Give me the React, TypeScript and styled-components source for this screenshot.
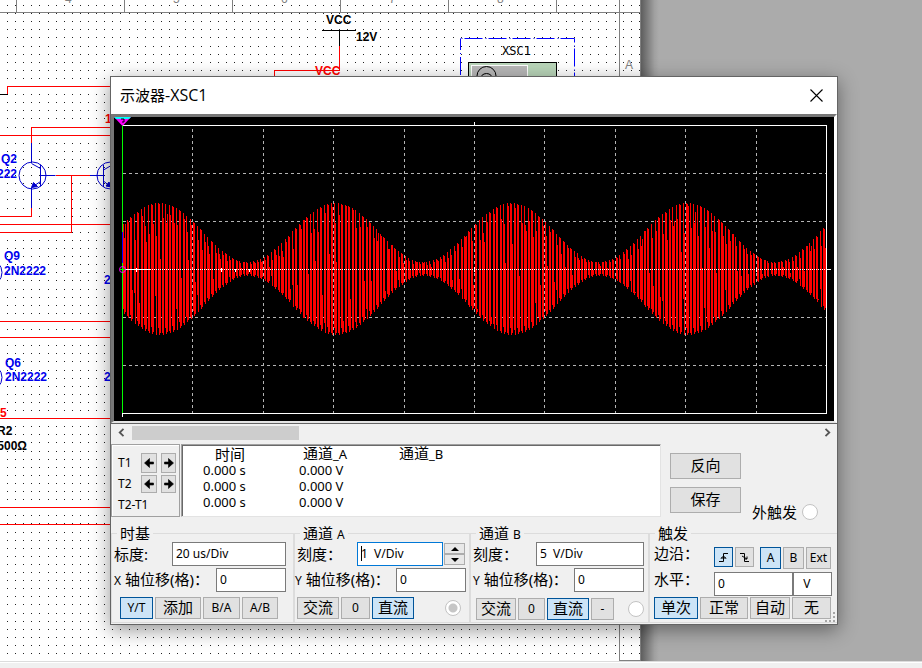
import React from "react";
import styled, { createGlobalStyle, css } from "styled-components";

const GlobalStyle = createGlobalStyle`
  *, *::before, *::after { box-sizing: border-box; }
  html, body, #root { height: 100%; }
  body {
    margin: 0;
    overflow: hidden;
    background: #ababab;
    color: #000;
    font-family: "Noto Sans", "Noto Sans CJK SC", sans-serif;
    font-size: 12px;
  }
  button, input { font: inherit; color: inherit; margin: 0; }
`;

/* ---------- workspace ---------- */

const Workspace = styled.main`
  position: relative;
  display: flex;
  flex-direction: column;
  height: 100%;
  overflow: hidden;
`;

const Canvas = styled.div`
  flex: 1;
  min-height: 0;
  display: flex;
  overflow: hidden;
`;

const Sheet = styled.svg`
  flex: none;
  display: block;
  background: #fff;
`;

const SheetShadow = styled.div`
  width: 18px;
  background: linear-gradient(90deg, #5e5e5e, #7c7c7c 35%, #a0a0a0 75%, #ababab);
`;

const StatusBar = styled.footer`
  height: 7px;
  background: #f0f0f0;
  border-top: 1px solid #dcdcdc;
  box-shadow: inset 0 1px #fff;
`;

/* ---------- dialog ---------- */

const Dialog = styled.section`
  position: absolute;
  top: 76px;
  left: 110px;
  right: 84px;
  border: 1px solid #646464;
  background: #f0f0f0;
  box-shadow: 0 5px 18px rgba(0, 0, 0, 0.42);
`;

const TitleBar = styled.header`
  display: flex;
  align-items: center;
  justify-content: space-between;
  height: 37px;
  padding: 0 14px 0 9px;
  background: #fff;
`;

const Title = styled.h1`
  margin: 0;
  padding-bottom: 2px;
  font-family: "Open Sans", "Noto Sans CJK SC", sans-serif;
  font-size: 15px;
  font-weight: 400;
  line-height: 20px;

  span { font-size: 16px; }
`;

const CloseButton = styled.button`
  display: flex;
  padding: 0;
  border: 0;
  background: none;
`;

const ScopeFrame = styled.div`
  border-style: solid;
  border-width: 3px 3px 2px 3px;
  border-color: #777 #fff #e4e4e4 #777;
  box-shadow: 0 1px #646464;
  background: #000;
`;

const ScopeScreen = styled.svg`
  display: block;
  width: 100%;
  height: auto;
`;

const ScrollBar = styled.div`
  display: flex;
  align-items: center;
  height: 17px;
  margin-top: 1px;
  padding: 0 4px;
`;

const ScrollArrow = styled.button`
  display: flex;
  align-items: center;
  justify-content: center;
  width: 12px;
  padding: 0;
  border: 0;
  background: none;
`;

const ScrollTrack = styled.div`
  flex: 1;
  padding: 0 5px;
`;

const ScrollThumb = styled.div`
  width: 167px;
  height: 14px;
  background: #cdcdcd;
`;

/* ---------- cursor readout ---------- */

const ReadoutRow = styled.div`
  display: flex;
  height: 73px;
  margin-top: 3px;
`;

const CursorPanel = styled.div`
  flex: none;
  display: grid;
  grid-template-columns: 19px 16px 15px;
  grid-template-rows: 20px 18px 20px;
  column-gap: 4px;
  row-gap: 2px;
  align-items: center;
  width: 69px;
  padding: 8px 0 0 6px;
  border: 1px solid #a0a0a0;
  box-shadow: inset 1px 1px #fff;
  line-height: 16px;
`;

const CursorName = styled.span<{ $wide?: boolean }>`
  ${(p) => p.$wide && css`grid-column: 1 / -1;`}
`;

const ArrowButton = styled.button`
  display: flex;
  align-items: center;
  justify-content: center;
  height: 100%;
  padding: 0;
  border: 1px solid #adadad;
  background: #e1e1e1;
`;

const ReadoutBox = styled.div`
  flex: 0 1 480px;
  margin-left: 1px;
  overflow: hidden;
  background: #fff;
  border: 1px solid;
  border-color: #a0a0a0 #e3e3e3 #e3e3e3 #a0a0a0;
  box-shadow: inset 1px 1px #696969;
`;

const ReadoutTable = styled.table`
  border-collapse: collapse;
  margin-left: 21px;

  th, td {
    padding: 0;
    width: 96px;
    text-align: left;
    font-weight: 400;
    font-size: 13px;
    line-height: 16px;
    white-space: pre;
  }
  th {
    font-size: 15px;
    padding-left: 12px;
  }
  th:not(:first-child) {
    padding-left: 4px;
  }
  small { font-size: 13px; }
`;

const ActionColumn = styled.div`
  display: flex;
  flex-direction: column;
  gap: 8px;
  width: 71px;
  margin-left: 9px;
  padding-top: 9px;
`;

const ExternalTrigger = styled.label`
  display: flex;
  align-items: center;
  align-self: flex-end;
  gap: 5px;
  margin: 0 0 -5px 11px;
  font-size: 15px;
  line-height: 20px;
`;

/* ---------- controls ---------- */

const PushButton = styled.button<{ $w?: number; $on?: boolean; $cjk?: boolean; $h?: number }>`
  flex: none;
  display: flex;
  align-items: center;
  justify-content: center;
  width: ${(p) => (p.$w ? `${p.$w}px` : "auto")};
  height: ${(p) => p.$h ?? 22}px;
  padding: 0 0 ${(p) => (p.$cjk ? 2 : 0)}px;
  border: 1px solid ${(p) => (p.$on ? "#005499" : "#adadad")};
  background: ${(p) => (p.$on ? "#cce4f7" : "#e1e1e1")};
  font-size: ${(p) => (p.$cjk ? 15 : 12)}px;
  line-height: 18px;
  white-space: nowrap;
`;

const ActionButton = styled(PushButton)`
  padding-bottom: 3px;
`;

const RadioDot = styled.input`
  appearance: none;
  flex: none;
  width: 16px;
  height: 16px;
  border: 1px solid #c3c3c3;
  border-radius: 50%;
  background: #fff;

  &:checked {
    background: radial-gradient(circle, #c6c6c6 0 4px, #fff 5px);
  }
`;

const Groups = styled.div`
  display: grid;
  grid-template-columns: 182fr 176fr 179fr 189fr;
  margin-top: 8px;
  padding-bottom: 1px;
`;

const Group = styled.fieldset`
  min-width: 0;
  height: 98px;
  margin: 0;
  padding: 0;
  border: 1px solid #dcdcdc;
  border-right-width: 0;

  & + & {
    border-left-width: 2px;
  }
`;

const Legend = styled.legend`
  margin-left: 5px;
  padding: 0 3px;
  height: 17px;
  font-size: 15px;
  line-height: 17px;

  small { font-size: 12px; }
`;

const Line = styled.div<{ $end?: number; $start?: number }>`
  display: flex;
  align-items: center;
  height: 24px;
  padding: 0 ${(p) => p.$end ?? 4}px 0 ${(p) => p.$start ?? 2}px;
  margin-bottom: 2px;
`;

const TriggerLine = styled(Line)`
  align-items: flex-start;
`;

const FieldLabel = styled.label`
  flex: none;
  margin-right: auto;
  font-size: 15px;
  line-height: 22px;
  white-space: pre;

  small { font-size: 12px; }
`;

const TextBox = styled.input<{ $w: number; $focus?: boolean }>`
  flex: none;
  width: ${(p) => p.$w}px;
  height: 24px;
  padding: 0 3px 2px;
  border: 1px solid ${(p) => (p.$focus ? "#0078d7" : "#7a7a7a")};
  border-radius: 0;
  background: #fff;
  outline: 0;
`;

const CaretField = styled.div`
  position: relative;

  &::before {
    content: "";
    position: absolute;
    left: 4px;
    top: 4px;
    width: 1px;
    height: 15px;
    background: #000;
  }
`;

const Spinner = styled.div`
  display: flex;
  flex-direction: column;
  width: 21px;
  margin-left: 1px;

  button {
    display: flex;
    align-items: center;
    justify-content: center;
    height: 11px;
    padding: 0;
    border: 1px solid #adadad;
    background: #e8e8e8;
  }
`;

const Buttons = styled.div<{ $start: number; $top?: number; $end?: number }>`
  display: flex;
  align-items: center;
  gap: 2px;
  padding: ${(p) => p.$top ?? 3}px ${(p) => p.$end ?? 8}px 0 ${(p) => p.$start}px;

  input { margin-left: auto; }
`;

const EdgeButtons = styled.div`
  display: flex;
  gap: 2px;
  padding: 5px 1px 0 0;

  button:nth-child(3) { margin-left: 4px; }
`;

const LevelFields = styled.div`
  display: flex;
  padding-top: 4px;
`;

const Grip = styled.svg`
  position: absolute;
  right: 1px;
  bottom: 1px;
`;

/* ---------- drawings ---------- */

const STEP = 8.1;

function GridDots() {
  let d = "";
  for (let r = 0; r < 81; r++) {
    for (let c = 0; c < 79; c++) {
      d += `M${Math.round(7 + c * STEP)} ${Math.round(5 + r * STEP)}h1v1h-1z`;
    }
  }
  return <path d={d} fill="#222" shapeRendering="crispEdges" />;
}

function Transistor({ cx, cy }: { cx: number; cy: number }) {
  return (
    <g transform={`translate(${cx} ${cy})`} fill="none" stroke="#00c" strokeWidth="1">
      <circle r="13.5" />
      <path d="M8 -11V11M-1 -12L8 -7M8 6L-1 12M8 0H23" />
      <path d="M-1 12L1 7L5 11z" fill="#00c" />
    </g>
  );
}

function Schematic() {
  return (
    <Sheet width="641" height="661" viewBox="0 0 641 661" aria-label="电路图">
      <GridDots />
      <g stroke="#808080" fill="none" shapeRendering="crispEdges">
        <path d="M0 12.5H640M16.5 0V12M124.5 0V12M232.5 0V12M340.5 0V12M448.5 0V12M556.5 0V12M619.5 0V660.5H640M640.5 0V661" />
      </g>
      <g fill="#808080" fontFamily="Liberation Sans, sans-serif" fontSize="12">
        <text x="65" y="3">4</text>
        <text x="173" y="3">5</text>
        <text x="281" y="3">6</text>
        <text x="389" y="3">7</text>
        <text x="497" y="3">8</text>
        <text x="625" y="69">A</text>
      </g>
      <g stroke="red" fill="none" shapeRendering="crispEdges">
        <path d="M7.5 94V86.5H112M112 127.5H31.5V144M0 135.5H112M56 175.5H90M31.5 207V216.5H0M0 224.5H112M0 232.5H71.5V175M0 321.5H112M0 337.5H112M0 418.5H112M0 507.5H112M0 524.5H112" />
        <path d="M339.5 46V70.5H274.5V80" />
      </g>
      <path d="M0 94.5H8M322 30.5H356M339.5 30V46" stroke="#000" shapeRendering="crispEdges" />
      <path d="M31.5 143V163M31.5 188V208M90 175.5H103" stroke="#00c" shapeRendering="crispEdges" />
      <Transistor cx={32.5} cy={175.5} />
      <g fill="none" stroke="#00c">
        <circle cx="110.5" cy="175.5" r="13.5" />
        <path d="M103.5 165V187M103.5 170L112 165M103.5 181L112 188" />
        <path d="M106 186L109 182L111 187z" fill="#00c" />
        <circle cx="-11.5" cy="272.5" r="13.5" />
        <circle cx="-11.5" cy="377.5" r="13.5" />
      </g>
      <g fontFamily="Liberation Sans, sans-serif" fontSize="12" fontWeight="700">
        <g fill="#00e">
          <text x="1" y="163">Q2</text>
          <text x="17" y="178" textAnchor="end">2N2222</text>
          <text x="4" y="260">Q9</text>
          <text x="4" y="275">2N2222</text>
          <text x="104" y="284">2N2222</text>
          <text x="5" y="367">Q6</text>
          <text x="5" y="381">2N2222</text>
          <text x="104" y="381">2N2222</text>
        </g>
        <g fill="red">
          <text x="0" y="417">5</text>
          <text x="105" y="123">1</text>
          <text x="315" y="75">VCC</text>
        </g>
        <text x="-3" y="435">R2</text>
        <text x="27" y="450" textAnchor="end">500Ω</text>
        <text x="326" y="24">VCC</text>
        <text x="356" y="41">12V</text>
      </g>
      <path d="M460.5 80V38.5" stroke="#00f" strokeDasharray="18 3 1 3" strokeDashoffset="-5" fill="none" />
      <path d="M460.5 38.5H574.5V80" stroke="#00f" strokeDasharray="18 3 1 2" strokeDashoffset="-4" fill="none" />
      <text x="502" y="55" fontFamily="DejaVu Sans Mono, monospace" fontSize="12">XSC1</text>
      <rect x="468.5" y="62.5" width="88" height="30" fill="#b9d5b9" stroke="#000" />
      <rect x="471.5" y="65.5" width="56" height="30" fill="#b8b8b8" stroke="#fff" />
      <g fill="none" stroke="#000">
        <circle cx="486.5" cy="76" r="9.5" />
        <circle cx="486.5" cy="80" r="6.5" />
      </g>
    </Sheet>
  );
}

/* Amplitude-modulated carrier: 200 cycles across ten divisions, envelope period 2.5 divisions. */
function modulatedWave() {
  const mid = 152;
  const period = 3.52;
  const left = (k: number) => 9 + Math.round(k * period);
  const amp = (x: number) => 36.5 + 29.5 * Math.cos((2 * Math.PI * (x - 45)) / 176);
  let d = "";
  const bar = (x: number, from: number, to: number) => {
    if (x < 712 && to > from) d += `M${x} ${Math.round(from)}h1V${Math.round(to)}h-1z`;
  };
  for (let k = 0; k < 200; k++) {
    const x = left(k);
    const a = amp(x);
    const top = mid - a;
    const bottom = mid + a;
    const noise = ((k * 73 + k * k * 29) % 97) / 97;
    const wide = left(k + 1) - x === 4;
    if (wide) {
      const split = top + 2 * a * noise;
      bar(x, top, bottom - a * 0.1);
      bar(x + 1, top + (k % 3 ? 1 : a * 0.3), bottom);
      bar(x + 2, split, bottom - 2);
    } else {
      bar(x, top, k % 3 ? bottom - 2 : bottom - a * noise * 0.6);
      bar(x + 1, top + a * noise * 0.5, bottom);
    }
  }
  return d;
}

function Scope() {
  const columns = Array.from({ length: 9 }, (_, i) => Math.round(8 + (i + 1) * 70.4));
  return (
    <ScopeScreen viewBox="0 0 720 304" shapeRendering="crispEdges" role="img" aria-label="通道 A 波形">
      <g stroke="#b4b4b4" strokeDasharray="3 3">
        {columns.map((x) => (
          <path key={x} d={`M${x + 0.5} 12V296`} />
        ))}
        {[56, 104, 200, 248].map((y) => (
          <path key={y} d={`M9 ${y + 0.5}H712`} />
        ))}
      </g>
      <path d={modulatedWave()} fill="red" />
      <path d="M9 8.5H712.5V296.5H8M8.5 296V300M360.5 5V8" stroke="#fff" fill="none" />
      <path d="M6 152.5H36M712 152.5H717" stroke="#fff" />
      <path d="M36 152.5H712" stroke="#fff" strokeDasharray="1 1" />
      <path d="M22.5 151V155M107.5 151V155M121.5 152V155M135.5 152V155M360.5 150V155M642.5 151V155" stroke="#fff" />
      <path d="M8.5 2V296" stroke="#0f0" />
      <path d="M8.5 115V146" stroke="#00f" />
      <g shapeRendering="auto">
        <path d="M0 0H17L9 8.5H8z" fill="#f0f" />
        <path d="M0 0H17L15 2H2z" fill="#0ff" />
        <path d="M7 2H10V5H8" stroke="#000" fill="none" />
        <circle cx="8.5" cy="152.5" r="3" fill="none" stroke="#f0f" />
      </g>
      <path d="M6 152.5H11M8.5 150V155" stroke="#0f0" />
    </ScopeScreen>
  );
}

function Arrow({ right }: { right?: boolean }) {
  return (
    <svg width="10" height="10" viewBox="0 0 10 10" aria-hidden="true">
      <path
        d={right ? "M0.5 4H4.5V0.5L9.5 5L4.5 9.5V6H0.5z" : "M9.5 4H5.5V0.5L0.5 5L5.5 9.5V6H9.5z"}
        fill="#000"
        stroke="#000"
        strokeWidth="0.6"
      />
    </svg>
  );
}

function Chevron({ right }: { right?: boolean }) {
  return (
    <svg width="7" height="9" viewBox="0 0 7 9" aria-hidden="true">
      <path d={right ? "M1.5 0.8L5.3 4.5L1.5 8.2" : "M5.5 0.8L1.7 4.5L5.5 8.2"} fill="none" stroke="#555" strokeWidth="1.8" />
    </svg>
  );
}

function Triangle({ down }: { down?: boolean }) {
  return (
    <svg width="8" height="4" viewBox="0 0 8 4" aria-hidden="true">
      <path d={down ? "M0 0H8L4 4z" : "M0 4H8L4 0z"} fill="#000" />
    </svg>
  );
}

function EdgeIcon({ falling }: { falling?: boolean }) {
  return (
    <svg width="11" height="11" viewBox="0 0 11 11" fill="none" stroke="#000" aria-hidden="true">
      {falling ? (
        <path d="M1 1.5H5.5V9.5H10M3 4L8 7M8 4.5V7H5" />
      ) : (
        <path d="M1 9.5H5.5V1.5H10M3 6.5L5.5 4L8 6.5M3 6H8" />
      )}
    </svg>
  );
}

/* ---------- page ---------- */

export default function App() {
  return (
    <Workspace>
      <GlobalStyle />
      <Canvas>
        <Schematic />
        <SheetShadow />
      </Canvas>
      <StatusBar />

      <Dialog role="dialog" aria-labelledby="dialog-title">
        <TitleBar>
          <Title id="dialog-title">示波器<span>-XSC1</span></Title>
          <CloseButton aria-label="关闭">
            <svg width="13" height="13" viewBox="0 0 13 13">
              <path d="M0.5 0.5L12.5 12.5M12.5 0.5L0.5 12.5" stroke="#000" strokeWidth="1.1" />
            </svg>
          </CloseButton>
        </TitleBar>

        <ScopeFrame>
          <Scope />
        </ScopeFrame>

        <ScrollBar>
          <ScrollArrow aria-label="向左"><Chevron /></ScrollArrow>
          <ScrollTrack><ScrollThumb /></ScrollTrack>
          <ScrollArrow aria-label="向右"><Chevron right /></ScrollArrow>
        </ScrollBar>

        <ReadoutRow>
          <CursorPanel>
            <CursorName>T1</CursorName>
            <ArrowButton aria-label="T1 左移"><Arrow /></ArrowButton>
            <ArrowButton aria-label="T1 右移"><Arrow right /></ArrowButton>
            <CursorName>T2</CursorName>
            <ArrowButton aria-label="T2 左移"><Arrow /></ArrowButton>
            <ArrowButton aria-label="T2 右移"><Arrow right /></ArrowButton>
            <CursorName $wide>T2-T1</CursorName>
          </CursorPanel>
          <ReadoutBox>
            <ReadoutTable>
              <thead>
                <tr>
                  <th>时间</th>
                  <th>通道<small>_A</small></th>
                  <th>通道<small>_B</small></th>
                </tr>
              </thead>
              <tbody>
                {["T1", "T2", "T2-T1"].map((row) => (
                  <tr key={row}><td>0.000 s</td><td>0.000 V</td><td /></tr>
                ))}
              </tbody>
            </ReadoutTable>
          </ReadoutBox>
          <ActionColumn>
            <ActionButton $cjk $h={26}>反向</ActionButton>
            <ActionButton $cjk $h={26}>保存</ActionButton>
          </ActionColumn>
          <ExternalTrigger>
            外触发
            <RadioDot type="radio" name="external" />
          </ExternalTrigger>
        </ReadoutRow>

        <Groups>
          <Group>
            <Legend>时基</Legend>
            <Line $end={7}>
              <FieldLabel htmlFor="time-scale">标度:</FieldLabel>
              <TextBox id="time-scale" $w={114} defaultValue="20 us/Div" />
            </Line>
            <Line $end={7}>
              <FieldLabel htmlFor="x-pos"><small>X</small> 轴位移(格)：</FieldLabel>
              <TextBox id="x-pos" $w={70} defaultValue="0" />
            </Line>
            <Buttons $start={8}>
              <PushButton $w={33} $on>Y/T</PushButton>
              <PushButton $w={46} $cjk>添加</PushButton>
              <PushButton $w={37}>B/A</PushButton>
              <PushButton $w={36}>A/B</PushButton>
            </Buttons>
          </Group>

          <Group>
            <Legend>通道 <small>A</small></Legend>
            <Line>
              <FieldLabel htmlFor="a-scale">刻度：</FieldLabel>
              <CaretField>
                <TextBox id="a-scale" $w={86} $focus defaultValue="1  V/Div" />
              </CaretField>
              <Spinner>
                <button aria-label="增大"><Triangle /></button>
                <button aria-label="减小"><Triangle down /></button>
              </Spinner>
            </Line>
            <Line $start={0} $end={3}>
              <FieldLabel htmlFor="a-pos"><small>Y</small> 轴位移(格)：</FieldLabel>
              <TextBox id="a-pos" $w={70} defaultValue="0" />
            </Line>
            <Buttons $start={2}>
              <PushButton $w={42} $cjk>交流</PushButton>
              <PushButton $w={29}>0</PushButton>
              <PushButton $w={42} $cjk $on>直流</PushButton>
              <RadioDot type="radio" name="source-a" aria-label="通道 A" defaultChecked />
            </Buttons>
          </Group>

          <Group>
            <Legend>通道 <small>B</small></Legend>
            <Line>
              <FieldLabel htmlFor="b-scale">刻度：</FieldLabel>
              <TextBox id="b-scale" $w={108} defaultValue="5  V/Div" />
            </Line>
            <Line>
              <FieldLabel htmlFor="b-pos"><small>Y</small> 轴位移(格)：</FieldLabel>
              <TextBox id="b-pos" $w={70} defaultValue="0" />
            </Line>
            <Buttons $start={5} $top={4} $end={4}>
              <PushButton $w={40} $cjk>交流</PushButton>
              <PushButton $w={27}>0</PushButton>
              <PushButton $w={42} $cjk $on>直流</PushButton>
              <PushButton $w={23}>-</PushButton>
              <RadioDot type="radio" name="source-b" aria-label="通道 B" />
            </Buttons>
          </Group>

          <Group>
            <Legend>触发</Legend>
            <TriggerLine $start={4} $end={5}>
              <FieldLabel as="span">边沿：</FieldLabel>
              <EdgeButtons>
                <PushButton $w={19} $h={20} $on aria-label="上升沿"><EdgeIcon /></PushButton>
                <PushButton $w={19} $h={20} aria-label="下降沿"><EdgeIcon falling /></PushButton>
                <PushButton $w={21} $on>A</PushButton>
                <PushButton $w={21}>B</PushButton>
                <PushButton $w={25}>Ext</PushButton>
              </EdgeButtons>
            </TriggerLine>
            <TriggerLine $start={4} $end={5}>
              <FieldLabel htmlFor="level">水平：</FieldLabel>
              <LevelFields>
                <TextBox id="level" $w={79} defaultValue="0" />
                <TextBox aria-label="单位" $w={39} defaultValue="  V" />
              </LevelFields>
            </TriggerLine>
            <Buttons $start={4} $end={0}>
              <PushButton $w={44} $cjk $on>单次</PushButton>
              <PushButton $w={48} $cjk>正常</PushButton>
              <PushButton $w={40} $cjk>自动</PushButton>
              <PushButton $w={39} $cjk>无</PushButton>
            </Buttons>
          </Group>
        </Groups>
        <Grip width="12" height="12" viewBox="0 0 12 12" fill="#a6a6a6" aria-hidden="true">
          <path d="M9 1h2v2h-2zM9 5h2v2h-2zM5 9h2v2h-2zM1 9h2v2h-2zM9 9h2v2h-2z" />
        </Grip>
      </Dialog>
    </Workspace>
  );
}
